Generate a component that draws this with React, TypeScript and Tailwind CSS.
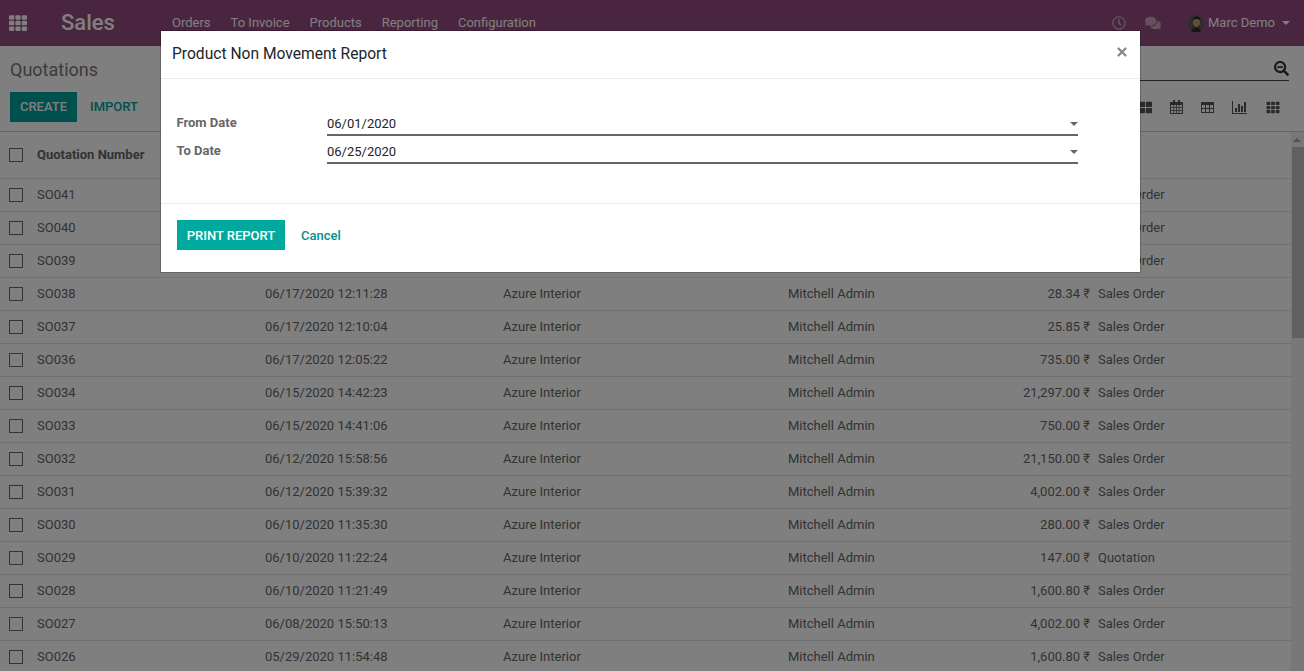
import { FaTh, FaThLarge, FaComments, FaSearchMinus, FaRegClock } from "react-icons/fa";
import { X } from "lucide-react";

// first three rows sit behind the dialog, only the id and the end of the status show
const ROWS = [
  ["SO041", "", "", "Sales Order"],
  ["SO040", "", "", "Sales Order"],
  ["SO039", "", "", "Sales Order"],
  ["SO038", "06/17/2020 12:11:28", "28.34", "Sales Order"],
  ["SO037", "06/17/2020 12:10:04", "25.85", "Sales Order"],
  ["SO036", "06/17/2020 12:05:22", "735.00", "Sales Order"],
  ["SO034", "06/15/2020 14:42:23", "21,297.00", "Sales Order"],
  ["SO033", "06/15/2020 14:41:06", "750.00", "Sales Order"],
  ["SO032", "06/12/2020 15:58:56", "21,150.00", "Sales Order"],
  ["SO031", "06/12/2020 15:39:32", "4,002.00", "Sales Order"],
  ["SO030", "06/10/2020 11:35:30", "280.00", "Sales Order"],
  ["SO029", "06/10/2020 11:22:24", "147.00", "Quotation"],
  ["SO028", "06/10/2020 11:21:49", "1,600.80", "Sales Order"],
  ["SO027", "06/08/2020 15:50:13", "4,002.00", "Sales Order"],
  ["SO026", "05/29/2020 11:54:48", "1,600.80", "Sales Order"],
];

const MENU = ["Orders", "To Invoice", "Products", "Reporting", "Configuration"];

function Box() {
  return <span className="block h-[14px] w-[14px] border border-[#666] bg-white" />;
}

function BarChartIcon() {
  return (
    <svg className="ml-[18px]" width="15" height="13" viewBox="0 0 15 13" fill="currentColor">
      <path d="M0 0h1v12h14v1H0z" />
      <rect x="3" y="7" width="2" height="4" />
      <rect x="6" y="3" width="2" height="8" />
      <rect x="9" y="5" width="2" height="6" />
      <rect x="12" y="1" width="2" height="10" />
    </svg>
  );
}

function CalendarIcon() {
  return (
    <svg className="ml-[18px]" width="13" height="14" viewBox="0 0 13 14" fill="currentColor">
      <path d="M0 2h13v12H0zM1 5v8h11V5z" />
      <path d="M3 0h2v3H3zM8 0h2v3H8z" />
      <path d="M3.5 5h.8v8h-.8zM6.1 5h.8v8h-.8zM8.7 5h.8v8h-.8zM1 7.3h11v.8H1zM1 10h11v.8H1z" />
    </svg>
  );
}

function TableIcon() {
  return (
    <svg className="ml-[18px]" width="13" height="11" viewBox="0 0 13 11" fill="currentColor">
      <path fillRule="evenodd" d="M0 0h13v11H0zM1 3v7h11V3z" />
      <path d="M4 3h1v7H4zM8 3h1v7H8zM1 6h11v1H1z" />
    </svg>
  );
}

function Avatar() {
  return (
    <svg className="ml-[27px]" width="16" height="17" viewBox="0 0 16 17">
      <ellipse cx="8" cy="8.5" rx="8" ry="8.5" fill="#5a5a58" />
      <ellipse cx="8.5" cy="7.5" rx="3.6" ry="4.6" fill="#c99a78" />
      <path d="M4.5 6c0-3 2-4.5 4-4.5s4 1.500 4 4.500c-1-1.500-2-2-4-2s-3 .5-4 2z" fill="#2a2520" />
      <path d="M5.500 10c1 3 5 3 6 0v2.500c-1 1.500-5 1.500-6 0z" fill="#4a3a2c" />
      <path d="M3 17c.5-3 2-4 5-4s4.500 1 5 4z" fill="#2e2e2c" />
    </svg>
  );
}

function DateField({ label, value }: { label: string; value: string }) {
  return (
    <div className="flex h-[28px] items-start">
      <label className="-ml-[0.5px] w-[150.5px] shrink-0 pt-[2px] text-[13px] font-bold leading-[18px] text-[#666]">{label}</label>
      <div className="relative h-[24px] w-[751px] border-b-2 border-[#666] pt-[3px] text-[13px] leading-[18px] text-[#212529]">
        {value}
        <span className="absolute right-0 top-[10px] h-0 w-0 border-x-[4.5px] border-t-[4px] border-x-transparent border-t-[#666]" />
      </div>
    </div>
  );
}

export default function App() {
  return (
    <div className="relative h-[671px] w-[1304px] overflow-hidden bg-white font-['Roboto',sans-serif] text-[13px] text-[#666]">
      <header className="flex h-[46px] items-center bg-[#934a7f] text-white">
        <FaTh className="ml-[9px] h-[18px] w-[18px]" />
        <span className="ml-[34px] w-[111px] text-[22px] font-medium leading-none">Sales</span>
        <nav className="flex gap-[20px] text-[13px]">
          {MENU.map((item) => (
            <span key={item}>{item}</span>
          ))}
        </nav>
        <div className="ml-auto flex items-center pr-[14px]">
          <FaRegClock className="h-[14px] w-[14px] opacity-50" />
          <FaComments className="ml-[19px] h-[16px] w-[16px] opacity-50" />
          <Avatar />
          <span className="ml-[4px] text-[13px]">Marc Demo</span>
          <span className="ml-[7px] h-0 w-0 border-x-[4.5px] border-t-[4px] border-x-transparent border-t-white" />
        </div>
      </header>

      <section className="h-[86px] border-b border-[#ccc] px-[10px]">
        <div className="flex h-[46px] items-center justify-between">
          <h1 className="pt-[1px] text-[18px] font-normal text-[#777]">Quotations</h1>
          <div className="mr-[5px] mt-[3px] flex h-[20px] w-[300px] justify-end border-b border-[#444] text-[#333]">
            <FaSearchMinus className="h-[15px] w-[15px]" />
          </div>
        </div>
        <div className="flex items-center">
          <button className="h-[30px] w-[67px] bg-[#00a09d] text-[13px] font-medium text-white">CREATE</button>
          <button className="ml-[13px] text-[13px] font-medium text-[#00a09d]">IMPORT</button>
          <div className="ml-auto flex items-center pr-[14px] text-[#555]">
            <FaThLarge className="h-[13px] w-[13px]" />
            <CalendarIcon />
            <TableIcon />
            <BarChartIcon />
            <FaTh className="ml-[19px] h-[13px] w-[14px]" />
          </div>
        </div>
      </section>

      <div className="flex">
        <div className="w-[1291px]">
          <div className="flex h-[47px] items-center border-b border-[#dee2e6] pl-[9px] font-bold">
            <Box />
            <span className="ml-[14px]">Quotation Number</span>
          </div>
          {ROWS.map(([id, date, amount, status]) => (
            <div key={id} className="flex h-[33px] items-center border-b border-[#dee2e6] pl-[9px]">
              <Box />
              <span className="ml-[14px] w-[228px]">{id}</span>
              <span className="w-[238px]">{date}</span>
              <span className="w-[285px]">{date && "Azure Interior"}</span>
              <span className="w-[200px]">{date && "Mitchell Admin"}</span>
              <span className="w-[102px] text-right">{amount && `${amount} ₹`}</span>
              <span className="ml-[8px]">{status}</span>
            </div>
          ))}
        </div>
        <div className="relative w-[13px] bg-[#f1f1f1]">
          <span className="absolute left-[2px] top-[6px] h-0 w-0 border-x-[4px] border-b-[4px] border-x-transparent border-b-[#a3a3a3]" />
          <span className="absolute left-[1px] right-0 top-[15px] h-[191px] bg-[#c1c1c1]" />
        </div>
      </div>

      <div className="absolute inset-0 bg-black/50" />

      <div className="absolute left-[161px] top-[31px] h-[241px] w-[979px] bg-white shadow-[0_0_0_1px_rgba(0,0,0,0.2)]">
        <div className="flex h-[48px] items-center justify-between border-b border-[#e9ecef] px-[11px]">
          <h2 className="text-[15.6px] font-normal text-[#212529]">Product Non Movement Report</h2>
          <X className="mb-[5px] h-[14px] w-[14px] text-[#888]" strokeWidth={4} />
        </div>
        <div className="h-[125px] border-b border-[#e9ecef] pl-[16px] pt-[33px]">
          <DateField label="From Date" value="06/01/2020" />
          <DateField label="To Date" value="06/25/2020" />
        </div>
        <div className="flex items-center pl-[16px] pt-[16px]">
          <button className="h-[30px] w-[108px] bg-[#00a99d] pt-[1px] text-[13px] font-medium text-white">PRINT REPORT</button>
          <button className="ml-[16px] pt-[1px] text-[13px] font-medium text-[#00908d]">Cancel</button>
        </div>
      </div>
    </div>
  );
}
